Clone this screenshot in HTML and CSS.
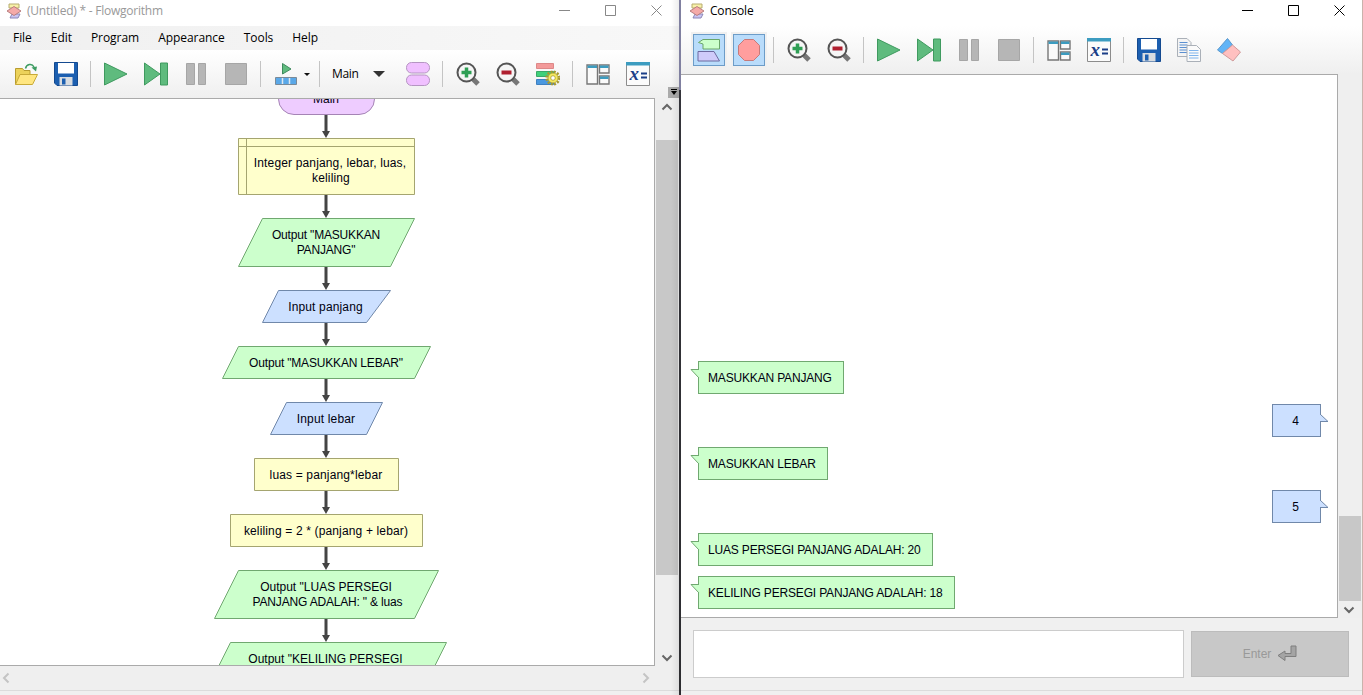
FILE: index.html
```html
<!DOCTYPE html>
<html lang="en">
<head>
<meta charset="utf-8">
<title>Flowgorithm</title>
<link rel="stylesheet" href="styles.css">
</head>
<body>
<svg class="defs" aria-hidden="true">
  <symbol id="i-logo" viewBox="0 0 16 16">
    <path d="M3 1h10v4H3z" fill="#f7f0a8" stroke="#b8ad70"/>
    <path d="M4 15l2-4h8l-2 4z" fill="#c9c4f2" stroke="#8d88b8"/>
    <path d="M8 3.500l7 4.500-7 4.500L1 8z" fill="#f5aaa8" stroke="#b87f80"/>
  </symbol>
  <symbol id="i-open" viewBox="0 0 24 24">
    <path d="M1.500 22.500V6.500h7l1.500 2h6v6" fill="#ecd25a" stroke="#b89c30"/>
    <path d="M1.500 22.500L6 12.500h17.500l-5 10z" fill="#ffe680" stroke="#c8aa38"/>
    <path d="M11.500 6.500C12.500 2 18 1 20 5" fill="none" stroke="#3d9c62" stroke-width="1.500"/>
    <path d="M17.500 5.500l5.500-1-1 5z" fill="#3d9c62"/>
  </symbol>
  <symbol id="i-save" viewBox="0 0 24 24">
    <path d="M.5.500h23v23H3L.5 21z" fill="#1c5fb0" stroke="#144a90"/>
    <path d="M4 1h16v10.500H4z" fill="#fff"/>
    <path d="M5.500 15h13v8.500h-13z" fill="#d8dce0"/>
    <path d="M8 16.500h3.500v6H8z" fill="#1c5fb0"/>
  </symbol>
  <symbol id="i-play" viewBox="0 0 24 24">
    <path d="M.5 1L23 12 .5 23z" fill="#5fbb7e" stroke="#3f9a5f"/>
  </symbol>
  <symbol id="i-step" viewBox="0 0 24 24">
    <path d="M.5 1L16 12 .5 23z" fill="#5fbb7e" stroke="#3f9a5f"/>
    <path d="M16.500 1h7v22h-7z" fill="#5fbb7e" stroke="#3f9a5f"/>
  </symbol>
  <symbol id="i-pause" viewBox="0 0 24 24">
    <path d="M2.500 1.500h8v21h-8zM14.500 1.500h7v21h-7z" fill="#b6b6b6" stroke="#a6a6a6"/>
  </symbol>
  <symbol id="i-stop" viewBox="0 0 24 24">
    <path d="M1.500 1.500h21v21h-21z" fill="#b6b6b6" stroke="#a6a6a6"/>
  </symbol>
  <symbol id="i-layer" viewBox="0 0 24 24">
    <path d="M8.500 1.500L17 7l-8.500 5z" fill="#5fbb7e" stroke="#3f8a5f"/>
    <path d="M1.500 15.500h21v7h-21z" fill="#5aa8e8" stroke="#7a8a98"/>
    <path d="M8.500 16v6M15.500 16v6" stroke="#dfe8f0" stroke-width="1.500"/>
  </symbol>
  <symbol id="i-pill" viewBox="0 0 24 24">
    <rect x=".5" y=".5" width="23" height="10.500" rx="5" fill="#f0c0ff" stroke="#b595c2"/>
    <rect x=".5" y="13" width="23" height="10.500" rx="5" fill="#f0c0ff" stroke="#b595c2"/>
  </symbol>
  <symbol id="i-zoomin" viewBox="0 0 24 24">
    <path d="M16 16l6 6" stroke="#777" stroke-width="5"/>
    <circle cx="10.500" cy="10.500" r="9" fill="#f6f6f6" stroke="#555" stroke-width="2"/>
    <path d="M10.500 5.500v10M5.500 10.500h10" stroke="#2f9f55" stroke-width="3.500"/>
  </symbol>
  <symbol id="i-zoomout" viewBox="0 0 24 24">
    <path d="M16 16l6 6" stroke="#777" stroke-width="5"/>
    <circle cx="10.500" cy="10.500" r="9" fill="#f6f6f6" stroke="#555" stroke-width="2"/>
    <path d="M5.500 10.500h10" stroke="#b02030" stroke-width="4"/>
  </symbol>
  <symbol id="i-config" viewBox="0 0 24 24">
    <path d="M.5 1.500h17v5h-17z" fill="#f39a9a" stroke="#d88"/>
    <path d="M.5 9.500h17v5h-17z" fill="#3fd07a" stroke="#3aa868"/>
    <path d="M.5 17.500h17v5h-17z" fill="#4a98e0" stroke="#4080c0"/>
    <circle cx="17" cy="16" r="6.300" fill="none" stroke="#a89a30" stroke-width="2.500" stroke-dasharray="2 1.300"/>
    <circle cx="17" cy="16" r="5" fill="#f6ea60" stroke="#a89a30" stroke-width=".8"/>
    <circle cx="17" cy="16" r="2.300" fill="#fff" stroke="#a89a30" stroke-width=".8"/>
  </symbol>
  <symbol id="i-panels" viewBox="0 0 24 24">
    <path d="M1 3h10.500v19H1zM13.500 3H23v8h-9.500zM13.500 14H23v8h-9.500z" fill="#fafafa" stroke="#777" stroke-width="1.400"/>
    <path d="M1.500 3.500h9.500v2.500H1.500zM14 3.500h8.500v2.500H14zM14 14.500h8.500v2.500H14z" fill="#3c9cc0"/>
  </symbol>
  <symbol id="i-varframe" viewBox="0 0 24 24">
    <path d="M.5.500h23v23H.5z" fill="#fbfbfb" stroke="#8c8c8c"/>
    <path d="M0 0h24v3.500H0z" fill="#3c9cc0"/>
    <path d="M15 10.500h6v2h-6zM15 14.500h6v2h-6z" fill="#1c3f88"/>
  </symbol>
  <symbol id="i-out" viewBox="0 0 32 32">
    <path d="M5.500 8.500l4.500-3h16.500v9.500H10v-5z" fill="#ccffcc" stroke="#6aa66a"/>
    <path d="M5 17.500h16l5.500 9.500H5z" fill="#cfcbfa" stroke="#6d6aa0"/>
  </symbol>
  <symbol id="i-halt" viewBox="0 0 32 32">
    <path d="M11.500 5.500h9l6 6v9l-6 6h-9l-6-6v-9z" fill="#ff9e9e" stroke="#c67a7a"/>
  </symbol>
  <symbol id="i-copy" viewBox="0 0 24 24">
    <path d="M.5.500h9.500l4 4v14H.5z" fill="#f4f4f4" stroke="#aab0b8"/>
    <path d="M2.500 4.500h8M2.500 7h8M2.500 9.500h8M2.500 12h8M2.500 14.500h8" stroke="#5b8fd0"/>
    <path d="M10 7.500h9.500l4 4v12H10z" fill="#fafafa" stroke="#aab0b8"/>
    <path d="M12 12.500h9.500M12 15h9.500M12 17.500h9.500M12 20h9.500" stroke="#7fb4ec" stroke-width="1.200"/>
  </symbol>
  <symbol id="i-erase" viewBox="0 0 24 24">
    <path d="M.5 12L10.500.5l5 6.500L5.500 15.500z" fill="#62b4f6" stroke="#5a98cc"/>
    <path d="M15.500 7l8 7-7.500 9-10.500-7.500z" fill="#ffc0c0" stroke="#d09a9a"/>
  </symbol>
  <symbol id="i-enter" viewBox="0 0 20 18">
    <path d="M14 1h5v10.500H8V15.500L1 10.500 8 6v2.500h6z" fill="#a4a4a4" stroke="#7e7e7e"/>
  </symbol>
  <symbol id="i-up" viewBox="0 0 12 8">
    <path d="M1.500 6.500L6 2l4.500 4.500" fill="none" stroke="currentColor" stroke-width="2"/>
  </symbol>
  <symbol id="i-down" viewBox="0 0 12 8">
    <path d="M1.500 1.500L6 6l4.500-4.500" fill="none" stroke="currentColor" stroke-width="2"/>
  </symbol>
  <symbol id="i-left" viewBox="0 0 8 12">
    <path d="M6.500 1.500L2 6l4.500 4.500" fill="none" stroke="currentColor" stroke-width="2"/>
  </symbol>
  <symbol id="i-right" viewBox="0 0 8 12">
    <path d="M1.500 1.500L6 6l-4.500 4.500" fill="none" stroke="currentColor" stroke-width="2"/>
  </symbol>
  <symbol id="i-min" viewBox="0 0 12 12"><path d="M0 5.500h11" stroke="currentColor"/></symbol>
  <symbol id="i-max" viewBox="0 0 12 12"><path d="M.5.500h10v10H.5z" fill="none" stroke="currentColor"/></symbol>
  <symbol id="i-close" viewBox="0 0 12 12"><path d="M.5.500l10 10M10.500 .5l-10 10" fill="none" stroke="currentColor"/></symbol>
</svg>

<div class="desk">
  <section class="win win-main">
    <header class="title title-dim">
      <svg class="logo"><use href="#i-logo"/></svg>
      <span class="title-text">(Untitled) * - Flowgorithm</span>
      <div class="caption">
        <svg class="cap"><use href="#i-min"/></svg>
        <svg class="cap"><use href="#i-max"/></svg>
        <svg class="cap"><use href="#i-close"/></svg>
      </div>
    </header>
    <nav class="menu">
      <span>File</span><span>Edit</span><span>Program</span><span>Appearance</span><span>Tools</span><span>Help</span>
    </nav>
    <div class="toolbar toolbar-main">
      <span class="tool"><svg class="ico"><use href="#i-open"/></svg></span>
      <span class="tool"><svg class="ico"><use href="#i-save"/></svg></span>
      <span class="sep"></span>
      <span class="tool"><svg class="ico"><use href="#i-play"/></svg></span>
      <span class="tool"><svg class="ico"><use href="#i-step"/></svg></span>
      <span class="tool"><svg class="ico"><use href="#i-pause"/></svg></span>
      <span class="tool"><svg class="ico"><use href="#i-stop"/></svg></span>
      <span class="sep"></span>
      <span class="tool tool-split"><svg class="ico"><use href="#i-layer"/></svg><i class="caret-sm"></i></span>
      <span class="sep"></span>
      <span class="combo"><span class="combo-text">Main</span><i class="caret"></i></span>
      <span class="tool"><svg class="ico"><use href="#i-pill"/></svg></span>
      <span class="sep"></span>
      <span class="tool"><svg class="ico"><use href="#i-zoomin"/></svg></span>
      <span class="tool"><svg class="ico"><use href="#i-zoomout"/></svg></span>
      <span class="tool"><svg class="ico"><use href="#i-config"/></svg></span>
      <span class="sep"></span>
      <span class="tool"><svg class="ico"><use href="#i-panels"/></svg></span>
      <span class="tool"><svg class="ico" viewBox="0 0 24 24"><use href="#i-varframe" width="24" height="24"/><text class="var-x" x="3.500" y="18">x</text></svg></span>
      <span class="overflow"><i class="overflow-bar"></i><i class="caret-xs"></i></span>
    </div>
    <div class="work">
      <div class="canvas">
        <svg class="chart" viewBox="0 99 654 566">
          <g class="flow">
            <path d="M326 115v17M326 194v18M326 266v18M326 322v18M326 378v18M326 434v18M326 490v18M326 546v18M326 618v18"/>
          </g>
          <g class="heads">
            <path d="M322 131h8l-4 7zM322 211h8l-4 7zM322 283h8l-4 7zM322 339h8l-4 7zM322 395h8l-4 7zM322 451h8l-4 7zM322 507h8l-4 7zM322 563h8l-4 7zM322 635h8l-4 7z"/>
          </g>
          <rect class="n-term" x="278.500" y="83.500" width="96" height="31" rx="15.500"/>
          <text class="lbl" x="326" y="103">Main</text>

          <path class="n-proc" d="M238.500 138.500h176v56h-176z"/>
          <path class="n-proc" d="M238.500 146.500h176M246.500 138.500v56"/>
          <text class="lbl lbl-low" x="330" y="167">Integer panjang, lebar, luas,</text>
          <text class="lbl lbl-low" x="331" y="182">keliling</text>

          <path class="n-out" d="M262.500 218.500H414.500L390.500 266.500H238.500z"/>
          <text class="lbl lbl-up" x="326" y="239">Output "MASUKKAN</text>
          <text class="lbl lbl-up" x="326" y="254">PANJANG"</text>

          <path class="n-in" d="M278.500 290.500H390.500L366.500 322.500H262.500z"/>
          <text class="lbl lbl-low" x="325.500" y="311">Input panjang</text>

          <path class="n-out" d="M238.500 346.500H430.500L414.500 378.500H222.500z"/>
          <text class="lbl lbl-up" x="326" y="367">Output "MASUKKAN LEBAR"</text>

          <path class="n-in" d="M286.500 402.500H382.500L366.500 434.500H270.500z"/>
          <text class="lbl lbl-low" x="326" y="423">Input lebar</text>

          <path class="n-proc" d="M254.500 458.500h144v32h-144z"/>
          <text class="lbl lbl-low" x="326" y="479">luas = panjang*lebar</text>

          <path class="n-proc" d="M230.500 514.500h192v32h-192z"/>
          <text class="lbl lbl-low" x="326" y="535">keliling = 2 * (panjang + lebar)</text>

          <path class="n-out" d="M238.500 570.500H438.500L414.500 618.500H214.500z"/>
          <text class="lbl" x="326" y="591">Output "LUAS PERSEGI</text>
          <text class="lbl lbl-up" x="327.500" y="606">PANJANG ADALAH: " &amp; luas</text>

          <path class="n-out" d="M230.500 642.500H446.500L422.500 690.500H206.500z"/>
          <text class="lbl" x="325.500" y="663">Output "KELILING PERSEGI</text>
        </svg>
      </div>
      <div class="vscroll vscroll-main">
        <svg class="arrow arrow-up"><use href="#i-up"/></svg>
        <div class="track track-main"><div class="thumb"></div></div>
        <svg class="arrow arrow-down"><use href="#i-down"/></svg>
      </div>
    </div>
    <div class="hscroll">
      <svg class="arrow-h"><use href="#i-left"/></svg>
      <svg class="arrow-h"><use href="#i-right"/></svg>
    </div>
  </section>

  <div class="divider"></div>

  <section class="win win-console">
    <header class="title">
      <svg class="logo logo-console"><use href="#i-logo"/></svg>
      <span class="title-text title-console">Console</span>
      <div class="caption caption-console">
        <svg class="cap"><use href="#i-min"/></svg>
        <svg class="cap"><use href="#i-max"/></svg>
        <svg class="cap"><use href="#i-close"/></svg>
      </div>
    </header>
    <div class="toolbar toolbar-console">
      <span class="tool"><span class="toggle"><svg class="ico-32"><use href="#i-out"/></svg></span></span>
      <span class="tool"><span class="toggle"><svg class="ico-32"><use href="#i-halt"/></svg></span></span>
      <span class="sep"></span>
      <span class="tool"><svg class="ico"><use href="#i-zoomin"/></svg></span>
      <span class="tool"><svg class="ico"><use href="#i-zoomout"/></svg></span>
      <span class="sep"></span>
      <span class="tool"><svg class="ico"><use href="#i-play"/></svg></span>
      <span class="tool"><svg class="ico"><use href="#i-step"/></svg></span>
      <span class="tool"><svg class="ico"><use href="#i-pause"/></svg></span>
      <span class="tool"><svg class="ico"><use href="#i-stop"/></svg></span>
      <span class="sep"></span>
      <span class="tool"><svg class="ico"><use href="#i-panels"/></svg></span>
      <span class="tool"><svg class="ico" viewBox="0 0 24 24"><use href="#i-varframe" width="24" height="24"/><text class="var-x" x="3.500" y="18">x</text></svg></span>
      <span class="sep"></span>
      <span class="tool"><svg class="ico"><use href="#i-save"/></svg></span>
      <span class="tool"><svg class="ico"><use href="#i-copy"/></svg></span>
      <span class="tool"><svg class="ico"><use href="#i-erase"/></svg></span>
    </div>
    <div class="work work-console">
      <div class="log">
        <div class="bubble bubble-out">MASUKKAN PANJANG<svg class="tail tail-l" viewBox="0 0 9 10"><path d="M9 .5H1L9 9"/></svg></div>
        <div class="bubble bubble-in">4<svg class="tail tail-r" viewBox="0 0 9 10"><path d="M0 1l8 7.500H0"/></svg></div>
        <div class="bubble bubble-out">MASUKKAN LEBAR<svg class="tail tail-l" viewBox="0 0 9 10"><path d="M9 .5H1L9 9"/></svg></div>
        <div class="bubble bubble-in">5<svg class="tail tail-r" viewBox="0 0 9 10"><path d="M0 1l8 7.500H0"/></svg></div>
        <div class="bubble bubble-out">LUAS PERSEGI PANJANG ADALAH: 20<svg class="tail tail-l" viewBox="0 0 9 10"><path d="M9 .5H1L9 9"/></svg></div>
        <div class="bubble bubble-out">KELILING PERSEGI PANJANG ADALAH: 18<svg class="tail tail-l" viewBox="0 0 9 10"><path d="M9 .5H1L9 9"/></svg></div>
      </div>
      <div class="vscroll vscroll-console">
        <div class="track track-console"><div class="thumb"></div></div>
        <svg class="arrow arrow-down"><use href="#i-down"/></svg>
      </div>
    </div>
    <div class="inputbar">
      <input class="entry" type="text" aria-label="Input">
      <button class="enter" type="button" disabled>Enter<svg class="enter-ico"><use href="#i-enter"/></svg></button>
    </div>
  </section>
</div>
</body>
</html>
```
FILE: styles.css
```css
* { box-sizing: border-box; }
html, body { margin: 0; height: 100%; overflow: hidden; }
body { background: #f0f0f0; font-family: "Open Sans", "Liberation Sans", sans-serif; font-size: 12px; color: #000; }
.defs { position: absolute; width: 0; height: 0; }
.desk { display: flex; width: 1363px; height: 695px; overflow: hidden; }

.win { display: flex; flex-direction: column; position: relative; height: 695px; background: #f0f0f0; }
.win-main { width: 679px; }
.win-main::after { content: ""; position: absolute; top: 0; right: 0; bottom: 0; width: 8px; background: linear-gradient(to right, rgba(0,0,0,0), rgba(0,0,0,.07)); pointer-events: none; }
.win-console { width: 682px; border-right: 1px solid #c9b3ac; }
.divider { width: 2px; background: linear-gradient(#8080a0 0, #8080a0 13%, #34343a 13%, #2c2c30 100%); }

.title { display: flex; align-items: center; height: 26px; flex: none; background: #fff; position: relative; }
.logo { width: 16px; height: 16px; margin: -4px 5px 0 6px; flex: none; }
.logo-console { margin: -5px 5px 0 8px; }
.title-text { line-height: 22px; margin-top: -4px; letter-spacing: -.23px; }
.title-console { letter-spacing: -.2px; }
.title-dim .title-text { color: #999; }
.caption { margin-left: auto; display: flex; gap: 34px; padding-right: 16px; margin-top: -4px; color: #888; }
.caption-console { color: #000; padding-right: 16px; }
.cap { width: 12px; height: 12px; display: block; }

.menu { display: flex; gap: 19px; align-items: center; height: 24px; flex: none; padding: 0 0 1px 13px; letter-spacing: -.05px; background: linear-gradient(to right, #f0f0f0, #f8f8f8); }

.toolbar { display: flex; align-items: center; height: 48px; flex: none; background: linear-gradient(#fff, #efefef); position: relative; }
.toolbar-main { padding-left: 6px; }
.toolbar-console { padding-left: 8px; }
.tool { width: 40px; height: 48px; display: flex; align-items: center; justify-content: center; flex: none; }
.tool-split { width: 49px; justify-content: flex-start; padding-left: 8px; }
.ico { width: 24px; height: 24px; display: block; overflow: visible; }
.ico-32 { width: 32px; height: 32px; display: block; margin: -1px; }
.sep { width: 1px; height: 26px; margin: 0 5px 0 4px; background: #c4c4c4; flex: none; }
.toggle { width: 32px; height: 32px; display: block; background: #b9dcfb; border: 1px solid #6c9cc8; box-shadow: 0 0 0 2px #f0f0f0; }
.caret-sm { width: 0; height: 0; margin-left: 6px; border: 3px solid transparent; border-top: 3px solid #111; border-bottom: 0; }
.combo { width: 73px; padding: 0 0 2px 7px; display: flex; align-items: center; flex: none; }
.combo-text { letter-spacing: -.3px; }
.caret { width: 0; height: 0; margin: 2px 0 0 14px; border: 6px solid transparent; border-top: 6px solid #333; border-bottom: 0; }
.overflow { position: absolute; top: 37px; left: 668px; width: 11px; height: 11px; background: #aaa; display: flex; flex-direction: column; align-items: center; padding-top: 2px; }
.overflow-bar { width: 6px; height: 1px; background: #000; margin-bottom: 1px; }
.caret-xs { width: 0; height: 0; border: 3px solid transparent; border-top: 4px solid #000; border-bottom: 0; }

.work { display: flex; height: 568px; flex: none; }
.canvas { width: 655px; height: 568px; background: #fff; border: solid #aaa; border-width: 1px 1px 1px 0; flex: none; overflow: hidden; }
.chart { width: 654px; height: 566px; display: block; }
.lbl { font-family: "Liberation Sans", Arial, sans-serif; font-size: 12px; text-anchor: middle; fill: #00000f; }
.lbl-low { letter-spacing: .15px; }
.lbl-up { letter-spacing: -.18px; }
.var-x { font-family: "Liberation Serif", serif; font-size: 19px; font-weight: 700; font-style: italic; fill: #1c3f88; }
.flow path { fill: none; stroke: #444; stroke-width: 3; }
.heads path { fill: #444; }
.n-term { fill: #eeccff; stroke: #a584b5; }
.n-proc { fill: #ffffcc; stroke: #a5a570; }
.n-out { fill: #ccffcc; stroke: #70a870; }
.n-in { fill: #cce0ff; stroke: #7088aa; }

.vscroll { display: flex; flex-direction: column; align-items: center; position: relative; flex: none; background: #efefef; color: #666; }
.vscroll-main { width: 24px; }
.arrow { width: 12px; height: 8px; display: block; flex: none; }
.track { flex: 1; width: 22px; }
.thumb { width: 22px; background: #c8c8c8; }
.arrow-up { margin-top: 5px; }
.arrow-down { margin: 0; position: absolute; }
.vscroll-main .arrow-down { bottom: 4px; }
.track-main { padding-top: 29px; margin-left: 0; }
.track-main .thumb { height: 435px; }
.hscroll { display: flex; justify-content: space-between; align-items: center; height: 25px; padding: 0 29px 0 2px; background: #efefef; border-bottom: 1px solid #dcdcdc; color: #c4c4c4; flex: none; }
.arrow-h { width: 8px; height: 12px; display: block; }

.work-console { height: 544px; }
.log { width: 657px; height: 544px; background: #fff; border: solid #aaa; border-width: 1px 1px 1px 0; display: flex; flex-direction: column; justify-content: flex-end; gap: 10px; padding: 0 16px 8px 17px; flex: none; overflow: hidden; font-family: "Liberation Sans", Arial, sans-serif; letter-spacing: -.17px; }
.bubble { position: relative; height: 33px; display: flex; align-items: center; color: #00000f; flex: none; width: max-content; }
.bubble-out { background: #ccffcc; border: 1px solid #70a870; padding: 0 11px 0 9px; align-self: flex-start; }
.bubble-in { background: #cce0ff; border: 1px solid #7088aa; width: 49px; justify-content: center; align-self: flex-end; padding-right: 2px; }
.tail { position: absolute; width: 9px; height: 10px; overflow: visible; }
.tail-l { left: -9px; top: 7px; }
.tail-l path { fill: #ccffcc; stroke: #70a870; }
.tail-r { right: -9px; top: 8px; }
.tail-r path { fill: #cce0ff; stroke: #7088aa; }
.vscroll-console { width: 24px; }
.track-console { padding-top: 442px; }
.track-console .thumb { height: 85px; }
.vscroll-console .arrow-down { bottom: 4px; left: 5px; }

.inputbar { display: flex; align-items: flex-start; gap: 7px; height: 73px; padding: 12px 0 0 12px; border-bottom: 1px solid #dcdcdc; flex: none; }
.entry { width: 491px; height: 48px; background: #fff; border: 1px solid #ccc; margin: 0; flex: none; }
.enter { width: 158px; height: 46px; margin: 1px 0 0; display: flex; align-items: center; justify-content: center; gap: 6px; background: #c8c8c8; border: 1px solid #bcbcbc; color: #999; font: 12px "Liberation Sans", Arial, sans-serif; flex: none; padding: 0; }
.enter-ico { width: 20px; height: 18px; display: block; }
```
